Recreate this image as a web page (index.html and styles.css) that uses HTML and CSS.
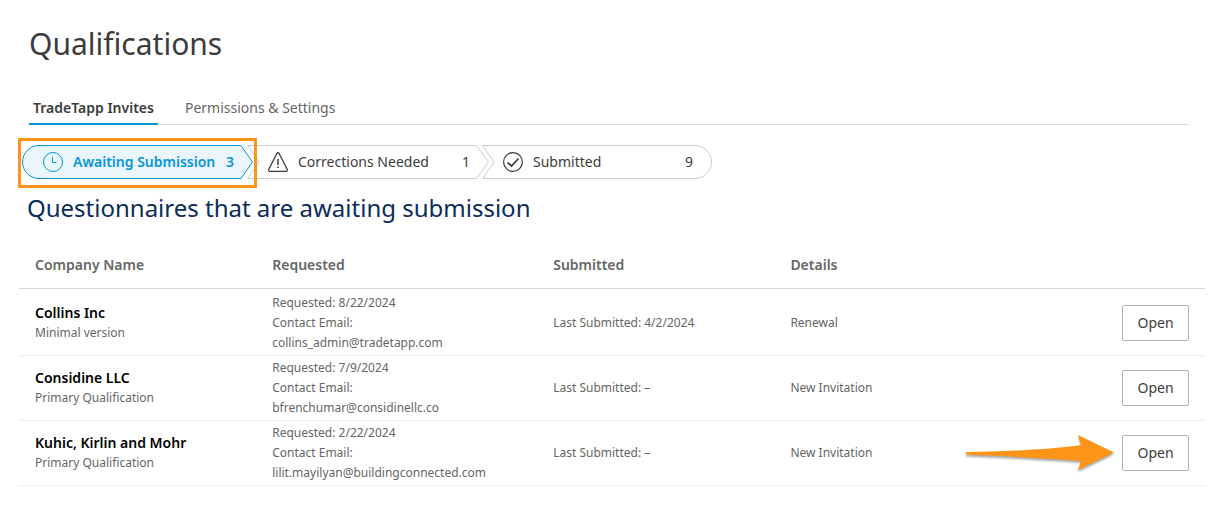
FILE: index.html
```html
<!DOCTYPE html>
<html lang="en">
<head>
    <meta charset="UTF-8">
    <meta name="viewport" content="width=device-width, initial-scale=1.0">
    <title>Qualifications</title>
    <link rel="stylesheet" href="styles.css">
</head>
<body>
    <header class="page-header">
        <h1 class="page-title">Qualifications</h1>
        <nav class="tabs">
            <a class="tab tab-active" href="#invites">TradeTapp Invites</a>
            <a class="tab" href="#settings">Permissions &amp; Settings</a>
        </nav>
    </header>

    <main class="content">
        <div class="steps">
            <button class="step step-first step-active" type="button">
                <svg class="step-shape" viewBox="0 0 231 34"><path d="M17 .5H219L230.500 17L219 33.500H17A16.500 16.500 0 0 1 17 .5Z"/></svg>
                <svg class="step-icon" viewBox="0 0 20 20"><circle cx="10" cy="10" r="9.500"/><path d="M9.500 4.500V10.500H13.500"/></svg>
                <span class="step-label">Awaiting Submission</span>
                <span class="step-count">3</span>
                <span class="highlight"></span>
            </button>
            <button class="step step-middle" type="button">
                <svg class="step-shape" viewBox="0 0 242 34"><path d="M.8 .5H229.500L241.500 17L229.500 33.500H.8L12 17Z"/></svg>
                <svg class="step-icon" viewBox="0 0 20 20"><path stroke-width="1.300" stroke-linejoin="round" d="M8.900 1.500Q10 0 11.100 1.500L19.200 17.200Q19.700 19.300 18 19.300H2Q.3 19.300 .8 17.200Z"/><path stroke-width="1.500" d="M10 7V13M10 14.500V16"/></svg>
                <span class="step-label">Corrections Needed</span>
                <span class="step-count">1</span>
            </button>
            <button class="step step-last" type="button">
                <svg class="step-shape" viewBox="0 0 230 34"><path d="M.8 .5H213A16.500 16.500 0 0 1 213 33.500H.8L12 17Z"/></svg>
                <svg class="step-icon" viewBox="0 0 20 20"><circle cx="10" cy="10" r="9.400" stroke-width="1.200"/><path stroke-width="1.700" d="M4.500 10.500L8.500 14L15.500 6.500"/></svg>
                <span class="step-label">Submitted</span>
                <span class="step-count">9</span>
            </button>
        </div>

        <h2 class="section-title">Questionnaires that are awaiting submission</h2>

        <table class="invites">
            <thead>
                <tr>
                    <th class="col-company">Company Name</th>
                    <th class="col-requested">Requested</th>
                    <th class="col-submitted">Submitted</th>
                    <th class="col-details">Details</th>
                    <th class="col-action"></th>
                </tr>
            </thead>
            <tbody>
                <tr>
                    <td><strong class="company">Collins Inc</strong>Minimal version</td>
                    <td>Requested: 8/22/2024<br>Contact Email:<br>collins_admin@tradetapp.com</td>
                    <td>Last Submitted: 4/2/2024</td>
                    <td>Renewal</td>
                    <td class="action"><button class="btn" type="button">Open</button></td>
                </tr>
                <tr>
                    <td><strong class="company">Considine LLC</strong>Primary Qualification</td>
                    <td>Requested: 7/9/2024<br>Contact Email:<br>bfrenchumar@considinellc.co</td>
                    <td>Last Submitted: –</td>
                    <td>New Invitation</td>
                    <td class="action"><button class="btn" type="button">Open</button></td>
                </tr>
                <tr>
                    <td><strong class="company">Kuhic, Kirlin and Mohr</strong>Primary Qualification</td>
                    <td>Requested: 2/22/2024<br>Contact Email:<br>lilit.mayilyan@buildingconnected.com</td>
                    <td>Last Submitted: –</td>
                    <td>New Invitation</td>
                    <td class="action">
                        <svg class="arrow" viewBox="0 0 148 36"><path d="M0 17Q80 15.500 115 10L112 0L148 17.500L112 35L115 26Q80 23 0 19.500Z"/></svg>
                        <button class="btn" type="button">Open</button>
                    </td>
                </tr>
            </tbody>
        </table>
    </main>
</body>
</html>
```
FILE: styles.css
```css
* { box-sizing: border-box; }

body {
    margin: 0;
    background: #fff;
    color: #3c3c3c;
    font: 14px/20px "Noto Sans", sans-serif;
}

button { font: inherit; color: inherit; cursor: pointer; }

/* header */
.page-header { padding: 24px 35px 0 29px; }
.page-title { margin: 0; font-size: 30px; line-height: 40px; font-weight: 400; }
.tabs { display: flex; gap: 23px; margin-top: 28px; border-bottom: 1px solid #dcdcdc; }
.tab { margin-bottom: -1px; padding: 6px 4px 5px; border-bottom: 2px solid transparent; color: #666; text-decoration: none; }
.tab-active { border-color: #0696d7; color: #3c3c3c; font-weight: 600; }

.content { padding: 0 19px; }

/* progress steps */
.steps { display: flex; margin: 20px 0 0 3px; }
.step { position: relative; display: flex; align-items: center; height: 34px; padding: 0 19px 0 21px; border: 0; background: none; text-align: left; }
.step-first { z-index: 1; width: 231px; }
.step-middle { width: 242px; margin-left: -6px; }
.step-last { width: 230px; margin-left: -7px; }
.step-shape { position: absolute; top: 0; left: 0; width: 100%; height: 34px; fill: #fff; stroke: #ccc; }
.step-icon { position: relative; flex: none; width: 20px; height: 20px; fill: none; stroke: currentColor; }
.step-label { position: relative; flex: 1; margin-left: 10px; white-space: nowrap; }
.step-count { position: relative; }
.step-active { color: #0696d7; font-weight: 600; }
.step-active .step-shape { fill: #ebf5fc; stroke: #0696d7; }
.highlight { position: absolute; top: -7px; right: -4px; bottom: -9px; left: -4px; border: 3px solid #ff9518; }

.section-title { margin: 12px 8px 0; color: #0c2c5a; font-size: 24px; line-height: 34px; font-weight: 400; }

/* invites table */
.invites { width: 100%; margin-top: 17px; border-collapse: separate; border-spacing: 0; table-layout: fixed; }
.invites th { padding: 13px 16px; border-bottom: 1px solid #d9d9d9; color: #666; font-weight: 600; text-align: left; }
.invites td { padding: 2px 16px; border-bottom: 1px solid #eee; color: #666; font-size: 12px; white-space: nowrap; }
.invites tbody tr:first-child td { padding-top: 4px; }
.col-company, .col-submitted, .col-details { width: 20%; }
.col-requested { width: 281px; }
.company { display: block; color: #000; font-size: 14px; font-weight: 600; }
.invites .action { position: relative; text-align: right; }
.btn { width: 67px; height: 36px; padding: 0; border: 1px solid #b3b3b3; border-radius: 2px; background: #fff; color: #3c3c3c; font-size: 14px; }
.arrow { position: absolute; top: 50%; right: 91px; width: 148px; height: 36px; margin-top: -18px; overflow: visible; fill: #ff9518; filter: drop-shadow(0 2px 1px rgba(0, 0, 0, .35)); }
```
